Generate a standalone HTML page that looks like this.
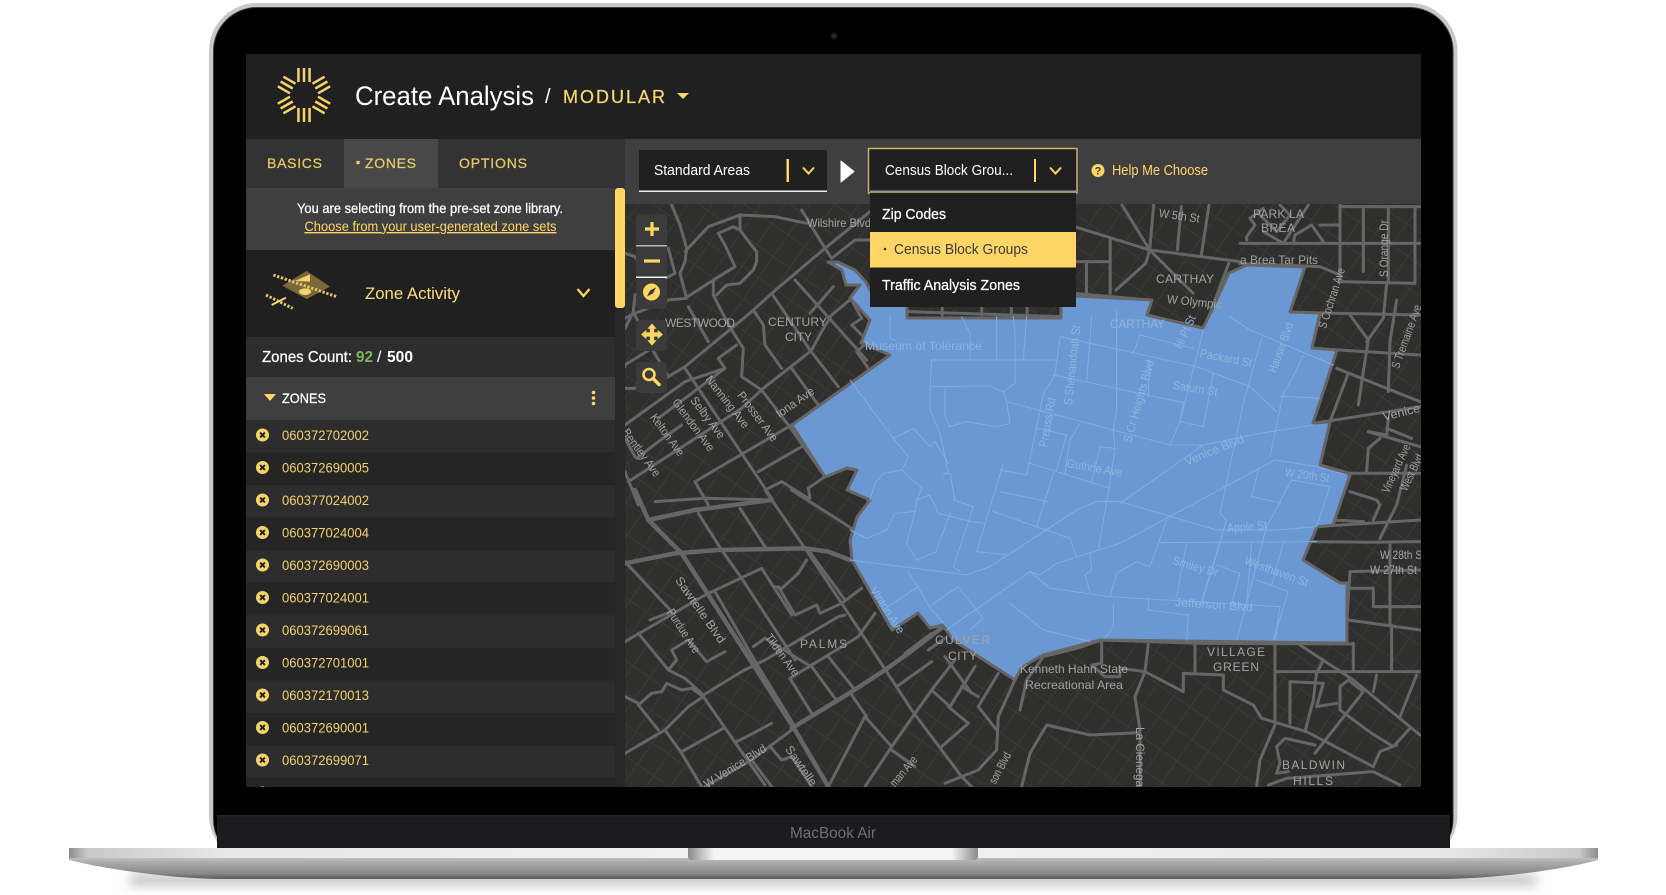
<!DOCTYPE html>
<html><head><meta charset="utf-8"><style>
html,body{margin:0;padding:0;background:#fff;width:1666px;height:895px;overflow:hidden}
svg{display:block;font-family:"Liberation Sans",sans-serif}
polyline{fill:none;stroke:#666;stroke-width:3;stroke-linejoin:round;stroke-linecap:round;vector-effect:non-scaling-stroke}
.w5 polyline{stroke-width:4.5}
.bl polyline{stroke:#80aeea;stroke-width:1}
.lb text{fill:#a3a3a3;font-size:12px}
.bt text{fill:#90b3e2;font-size:12px}
.hv{stroke-width:.25px}
</style></head><body>
<svg width="1666" height="895" viewBox="0 0 1666 895" xmlns="http://www.w3.org/2000/svg">
<defs>
<linearGradient id="baseV" x1="0" y1="0" x2="0" y2="1"><stop offset="0" stop-color="#c8c8c8"/><stop offset=".3" stop-color="#a9a9a9"/><stop offset=".75" stop-color="#8a8a8a"/><stop offset="1" stop-color="#5a5a5a"/></linearGradient>
<linearGradient id="baseH" x1="0" y1="0" x2="1" y2="0"><stop offset="0" stop-color="#8c8c8c"/><stop offset=".012" stop-color="#c9c9c9"/><stop offset=".1" stop-color="#e6e7e9"/><stop offset=".5" stop-color="#f2f3f5"/><stop offset=".9" stop-color="#e6e7e9"/><stop offset=".988" stop-color="#c9c9c9"/><stop offset="1" stop-color="#8c8c8c"/></linearGradient>
<linearGradient id="hing" x1="0" y1="0" x2="1" y2="0"><stop offset="0" stop-color="#8a8a8a"/><stop offset=".09" stop-color="#f4f4f4"/><stop offset=".91" stop-color="#f4f4f4"/><stop offset="1" stop-color="#8a8a8a"/></linearGradient>
<filter id="bl" x="-5%" y="-150%" width="110%" height="400%"><feGaussianBlur stdDeviation="6"/></filter>
<pattern id="st" width="20" height="26" patternUnits="userSpaceOnUse" patternTransform="rotate(35)"><rect width="20" height="26" fill="#2f2f2d"/><path d="M0 .5H20M.5 0V26" stroke="#3a3a38" stroke-width="1" fill="none"/></pattern>
<clipPath id="mc"><rect x="625" y="204" width="796" height="583"/></clipPath>
<clipPath id="lc"><rect x="246" y="420" width="369" height="367"/></clipPath>
<g id="xi"><circle r="6.5" fill="#f6d46b"/><path d="M-2.4-2.4L2.4 2.4M2.4-2.4L-2.4 2.4" stroke="#222" stroke-width="2"/></g>
<g id="bars"><rect x="-6.800" y="-27" width="2.500" height="14" fill="#f4d36b"/><rect x="-1.250" y="-27" width="2.500" height="14" fill="#f4d36b"/><rect x="4.300" y="-27" width="2.500" height="14" fill="#f4d36b"/></g>
</defs>

<!-- base shadow -->
<rect x="130" y="876" width="1406" height="8" fill="#a8a8a8" filter="url(#bl)"/>

<!-- lid -->
<rect x="209" y="3" width="1248.5" height="860" rx="48" fill="#c8c8c8"/>
<rect x="213" y="7" width="1240.5" height="856" rx="44" fill="#3a3a3a"/>
<rect x="214" y="8" width="1238.5" height="855" rx="43" fill="#000"/>
<rect x="217" y="816" width="1233" height="33" fill="#1b1b1d"/>
<rect x="217" y="815" width="1233" height="1.5" fill="#262628"/>
<circle cx="834" cy="36" r="3.5" fill="#1c1c1c"/><circle cx="834" cy="36" r="1.3" fill="#333"/>
<text x="790" y="838" font-size="16" fill="#6f6f71" textLength="86" lengthAdjust="spacingAndGlyphs">MacBook Air</text>

<!-- base -->
<path d="M69 856H1598V860C1570 868 1500 879 1440 879H225C170 879 100 868 69 860Z" fill="url(#baseV)"/>
<rect x="69" y="848" width="1529" height="10" fill="url(#baseH)"/>
<path d="M688 848H978V856Q978 860 974 860H692Q688 860 688 856Z" fill="url(#hing)"/>

<!-- header -->
<rect x="246" y="54" width="1175" height="85" fill="#202020"/>
<g transform="translate(304 95)">
<use href="#bars"/><use href="#bars" transform="rotate(60)"/><use href="#bars" transform="rotate(120)"/><use href="#bars" transform="rotate(180)"/><use href="#bars" transform="rotate(240)"/><use href="#bars" transform="rotate(300)"/>
</g>
<text x="355" y="105" font-size="27" fill="#fff" textLength="179" lengthAdjust="spacingAndGlyphs">Create Analysis</text>
<text x="545" y="103" font-size="20" fill="#fff">/</text>
<text x="563" y="103" font-size="18" fill="#f5d672" class="hv" stroke="#f5d672" textLength="102" lengthAdjust="spacing">MODULAR</text>
<path d="M677 93H689L683 99Z" fill="#f5d672"/>

<!-- map -->
<g clip-path="url(#mc)">
<rect x="625" y="204" width="796" height="583" fill="url(#st)"/>

<g transform="translate(625 205) scale(.3333)">
<polyline points="130,515 180,485 380,320 440,265 600,130 735,20"/>
<polyline points="620,160 690,105 735,105"/>
<polyline points="530,15 600,130 620,160"/>
<polyline points="180,140 250,65 345,30 450,35 545,55"/>
<polyline points="345,30 345,70"/>
<polyline points="280,85 325,65 345,75 375,115 395,140 395,170 385,195 345,235 305,240 275,270"/>
<polyline points="280,85 300,120 330,185 250,235 180,280 130,285 30,325 0,340"/>
<polyline points="330,185 265,225 265,270 285,310 320,375 355,430 350,515 410,555 490,660 600,815"/>
<polyline points="140,0 165,60 185,130 180,170 165,205 185,280"/>
<polyline points="130,130 150,205 30,270 25,320 0,370"/>
<polyline points="0,145 30,155 60,200"/>
<polyline points="190,305 250,410"/>
<polyline points="385,315 415,360 420,420 470,490"/>
<polyline points="440,265 555,435 640,545"/>
<polyline points="510,225 725,465"/>
<polyline points="680,280 620,330 590,380 560,435"/>
<polyline points="680,285 710,340 680,360 730,410 695,440 730,490"/>
<polyline points="555,325 625,245"/>
<polyline points="0,660 180,530 300,490 280,460 335,420"/>
<polyline points="10,830 350,610 415,550 555,440"/>
<polyline points="500,490 580,600"/>
<polyline points="180,490 360,760 440,880"/>
<polyline points="100,640 300,490"/>
<polyline points="35,760 100,710 170,660"/>
<polyline points="0,700 30,755"/>
<polyline points="210,830 500,660"/>
<polyline points="400,800 530,725"/>
<polyline points="600,815 550,850 555,880"/>
<polyline points="600,815 665,790 695,795 730,890"/>
<polyline points="430,850 470,830 550,880"/>
<polyline points="90,890 240,880 440,885"/>
<polyline points="210,830 250,900"/>
<polyline points="0,800 40,900"/>
<polyline points="130,515 80,430 0,480 0,485"/>
<polyline points="0,550 30,550 130,515"/>
<polyline points="80,430 30,330"/>
</g>

<g transform="translate(625 490) scale(.3333)">
<g class="w5"><polyline points="0,220 150,190 280,180 540,175 610,185 675,210"/>
<polyline points="70,90 210,60 440,30"/>
<polyline points="30,0 70,90 170,190 350,470 510,720 610,890"/>
<polyline points="500,715 680,605 780,540 850,490 955,410"/></g>
<polyline points="220,70 290,180 350,265 510,510"/>
<polyline points="345,55 420,170"/>
<polyline points="420,0 540,175 690,400 860,660 1010,860 1040,890"/>
<polyline points="500,0 680,115"/>
<polyline points="550,180 660,330"/>
<polyline points="0,455 240,315 410,235 500,375"/>
<polyline points="270,305 400,530 510,710"/>
<polyline points="450,290 470,295 520,250 545,210"/>
<polyline points="460,290 510,375 575,345 585,370 650,340 710,295"/>
<polyline points="385,470 420,445 550,525"/>
<polyline points="235,615 350,545 420,510 640,380 660,375"/>
<polyline points="495,565 700,440 750,370"/>
<polyline points="495,565 560,670"/>
<polyline points="560,530 630,625"/>
<polyline points="610,500 690,600"/>
<polyline points="815,590 920,515"/>
<polyline points="610,890 720,680 800,770 870,670 920,600 990,510"/>
<polyline points="800,770 720,890"/>
<polyline points="800,780 870,830"/>
<polyline points="680,615 725,680"/>
<polyline points="920,600 975,650 1050,530"/>
<polyline points="1010,590 1060,620"/>
<polyline points="1060,650 1115,720"/>
<polyline points="1060,650 1120,550"/>
<polyline points="1170,570 1120,680 1115,780 1060,840 960,880"/>
<polyline points="950,770 1030,700 970,650"/>
<polyline points="0,790 120,720 190,650 235,620 360,800 420,885"/>
<polyline points="170,785 295,715"/>
<polyline points="120,720 170,790 230,890"/>
<polyline points="335,755 365,740 440,700"/>
<polyline points="240,890 380,810 500,720"/>
<polyline points="380,810 440,890"/>
<polyline points="440,775 470,810 500,800 560,890"/>
<polyline points="40,645 80,610 110,605 125,580 170,600 200,595 235,620"/>
<polyline points="40,645 100,720"/>
<polyline points="130,540 155,510 140,480 190,450 245,515 300,485"/>
<polyline points="75,390 140,365 0,215"/>
<polyline points="40,430 130,540 180,565 235,615"/>
<polyline points="840,490 920,430"/>
<polyline points="910,480 960,445"/>
<polyline points="960,500 1040,610"/>
<polyline points="0,620 40,640"/>
</g>

<g transform="translate(1020 620) scale(.3333)">
<polyline points="0,270 20,180 70,110 170,85 245,60 540,70 1000,72"/>
<polyline points="245,60 245,130 215,135 255,170 300,170 300,145 375,155 490,215 490,160 610,165 610,210 700,255 725,295 860,335 1060,440"/>
<polyline points="375,155 345,230 360,330 360,500"/>
<polyline points="385,70 375,155"/><polyline points="525,70 525,155"/>
<polyline points="765,70 765,300"/><polyline points="1000,70 1000,155"/><polyline points="770,155 1200,155"/>
<polyline points="80,315 210,345 360,338"/><polyline points="80,315 30,400 5,500"/>
<polyline points="840,75 1000,180 1200,345"/>
<polyline points="890,160 910,120"/><polyline points="890,155 880,240 855,335"/>
<polyline points="810,310 810,185 910,190 890,260 950,250"/>
<polyline points="960,200 985,180 1030,215 885,400"/>
<polyline points="960,200 960,270 1055,340 1120,380 1170,325"/>
<polyline points="765,315 720,420 710,500"/>
<polyline points="770,380 795,355 885,375"/>
<polyline points="770,380 780,430 770,460 805,455"/>
<polyline points="745,495 800,475 1060,455 1140,495"/>
<polyline points="1060,440 1080,395 1130,375"/>
<polyline points="1115,15 1115,155"/><polyline points="985,0 1200,30"/>
<polyline points="1070,165 1060,215"/><polyline points="1190,165 1140,290"/>
</g>

<g transform="translate(1240 205) scale(.3333)">
<polyline points="0,115 540,115"/><polyline points="300,5 540,5"/>
<polyline points="300,0 300,210"/><polyline points="370,10 370,200"/><polyline points="445,10 445,230"/><polyline points="525,10 525,230"/>
<polyline points="0,175 240,185 300,210 300,230 525,235"/>
<polyline points="150,322 540,330"/>
<polyline points="330,330 385,405 370,500 355,600"/>
<polyline points="240,330 215,430 540,450"/>
<polyline points="290,490 540,590"/>
<polyline points="325,505 270,650"/>
<polyline points="220,655 540,605"/>
<polyline points="270,650 240,780 330,805 540,805"/>
<polyline points="385,680 540,725"/>
<polyline points="385,680 440,690 445,640"/>
<polyline points="440,670 515,700"/>
<polyline points="330,860 410,885 420,900 400,945"/>
<polyline points="330,810 280,945 370,950"/>
<polyline points="230,965 540,945"/>
<polyline points="215,1010 385,1012 540,1010"/>
<polyline points="420,1000 470,900 500,780"/>
<polyline points="380,800 385,730 420,700"/>
<polyline points="330,1100 540,1095"/><polyline points="330,1100 320,1260"/>
<polyline points="450,1020 450,1260"/>
<polyline points="330,1150 400,1150 400,1205 540,1205"/>
<polyline points="440,235 430,340 380,410"/>
<polyline points="470,285 450,410 445,560"/>
<polyline points="20,105 20,95 45,60 30,40 70,10"/>
<polyline points="60,30 110,80 150,30 120,0"/>
<polyline points="160,115 165,90 215,60 250,110"/>
<polyline points="70,80 130,115 205,0"/>
<polyline points="240,60 300,60"/>
</g>

<g transform="translate(620 130) scale(.3953 .3333)">
<polyline points="1150,290 1340,360 1568,395"/>
<polyline points="1240,330 1240,490"/><polyline points="1180,400 1180,490"/><polyline points="1150,395 1240,395"/>
<polyline points="1270,225 1340,360 1450,490"/>
<polyline points="1350,225 1340,360"/><polyline points="1420,230 1410,360"/><polyline points="1490,225 1470,380"/>
<polyline points="1340,360 1330,400 1255,480"/>
<polyline points="1150,490 1340,510"/>
<polyline points="1540,400 1480,590"/>
<polyline points="730,545 1115,560"/>
<polyline points="815,530 815,555"/><polyline points="915,530 915,555"/><polyline points="990,530 990,555"/><polyline points="1030,530 1030,555"/>
</g>

<!-- blue zone -->
<polygon points="828,262 838,262 855,270 866,282 870,290 880,305 907,305 907,318 1061,318 1061,305 1076,296 1152,300 1147,315 1203,328 1212,310 1229,273 1247,265 1305,267 1290,312 1320,313 1312,348 1337,350 1313,423 1330,422 1320,465 1350,475 1333,525 1317,527 1303,560 1340,583 1347,583 1347,643 1100,640 1043,655 1022,667 1015,680 953,640 943,625 930,628 918,613 892,630 852,560 850,540 857,517 870,500 847,490 857,470 847,468 825,477 792,425 890,355 861,343 870,320 850,298 860,285 846,285 842,270" fill="#6b98d2" stroke="#666" stroke-width="3" stroke-linejoin="round"/>

<g class="bl" transform="translate(850 310) scale(.3333)">
<polyline points="120,15 120,85 135,90"/>
<polyline points="245,150 620,150"/>
<polyline points="245,150 240,230 240,300 270,370 295,490 280,492"/>
<polyline points="240,230 420,228 460,245 470,275 480,340 440,350 350,335 300,350 285,320 285,235"/>
<polyline points="335,20 360,70 360,150"/><polyline points="440,20 440,150"/>
<polyline points="490,20 495,70 495,220 460,245"/><polyline points="530,20 520,150"/>
<polyline points="630,85 615,195 580,250 530,495 450,480"/>
<polyline points="630,80 1040,170 1200,230 1280,305"/>
<polyline points="610,195 1000,278"/>
<polyline points="470,275 960,405 1060,405"/>
<polyline points="800,0 800,300 790,360 795,420 770,575 745,720"/>
<polyline points="725,20 710,215"/><polyline points="900,150 895,260"/>
<polyline points="1000,278 990,335 960,405"/>
<polyline points="1060,60 990,335 1060,350 1090,190"/>
<polyline points="850,130 870,75 1030,115"/>
<polyline points="1140,20 1200,60 1450,165"/>
<polyline points="1235,85 1180,280 1110,610 1130,630 1050,890"/>
<polyline points="1360,135 1330,200 1300,250 1260,440"/>
<polyline points="1290,258 1410,265"/>
<polyline points="1390,345 1230,370 1060,405 810,580"/>
<polyline points="0,750 350,795 420,770 680,600 740,575 810,575 1100,660 1280,660 1400,650"/>
<polyline points="1275,450 1400,470 1490,495"/>
<polyline points="1275,450 810,700 620,760 570,795 540,785 290,960"/>
<polyline points="1325,510 1440,530 1400,650"/>
<polyline points="1325,510 1250,650 1190,880 1160,990"/>
<polyline points="1225,480 1205,560 1295,580"/>
<polyline points="540,460 780,535"/>
<polyline points="650,375 620,480"/><polyline points="690,340 660,390 645,490"/>
<polyline points="750,410 725,520"/><polyline points="750,410 795,415"/>
<polyline points="560,355 650,375"/>
<polyline points="450,545 595,575"/>
<polyline points="610,490 560,650 660,685 680,740"/>
<polyline points="430,605 660,685"/>
<polyline points="460,460 380,725 475,735"/>
<polyline points="0,210 130,385 190,355 240,410 255,395 295,460"/>
<polyline points="130,385 175,440 155,480 100,490 75,520 60,570"/>
<polyline points="155,480 215,535 200,570 195,605 135,610 110,660 50,685 0,660"/>
<polyline points="200,570 240,555 265,610 365,635 405,640"/>
<polyline points="310,570 370,590 310,770 330,785"/>
<polyline points="260,720 300,610"/>
<polyline points="300,490 315,570"/>
<polyline points="195,605 170,700 200,750 260,725"/>
<polyline points="175,785 245,900 290,950"/>
<polyline points="100,900 205,830"/>
<polyline points="245,885 325,830 395,920"/>
<polyline points="540,785 600,835 780,860 1290,890"/>
<polyline points="780,860 800,790 860,755 900,770 950,630"/>
<polyline points="930,698 1400,695"/>
<polyline points="1010,700 980,860"/><polyline points="1110,700 1055,880"/>
<polyline points="1100,765 1170,790 1145,880"/>
<polyline points="1205,700 1190,880"/><polyline points="1300,698 1265,825"/>
<polyline points="1220,810 1315,845 1270,990"/>
<polyline points="895,865 895,900 1015,915 1010,990"/>
<polyline points="480,880 580,960 720,995"/>
<polyline points="720,730 725,780 705,795 720,845"/>
<polyline points="360,960 400,925"/>
<polyline points="790,880 790,950 765,985"/>
<polyline points="1290,890 1275,990"/>
</g>

<!-- map labels, dark -->
<g class="lb" dominant-baseline="central">
<text x="807" y="223" textLength="64" lengthAdjust="spacingAndGlyphs">Wilshire Blvd</text>
<text x="665" y="323" textLength="70" lengthAdjust="spacing">WESTWOOD</text>
<text x="768" y="322" textLength="59" lengthAdjust="spacing">CENTURY</text>
<text x="785" y="337" textLength="27" lengthAdjust="spacing">CITY</text>
<text x="800" y="644" textLength="47" lengthAdjust="spacing">PALMS</text>
<text x="935" y="640" textLength="55" lengthAdjust="spacing">CULVER</text>
<text x="948" y="656" textLength="29" lengthAdjust="spacing">CITY</text>
<text x="1020" y="669" textLength="108" lengthAdjust="spacingAndGlyphs">Kenneth Hahn State</text>
<text x="1025" y="685" textLength="98" lengthAdjust="spacingAndGlyphs">Recreational Area</text>
<text x="1207" y="652" textLength="58" lengthAdjust="spacing">VILLAGE</text>
<text x="1213" y="667" textLength="46" lengthAdjust="spacing">GREEN</text>
<text x="1282" y="765" textLength="63" lengthAdjust="spacing">BALDWIN</text>
<text x="1293" y="781" textLength="40" lengthAdjust="spacing">HILLS</text>
<text x="1240" y="260" textLength="78" lengthAdjust="spacingAndGlyphs">a Brea Tar Pits</text>
<text x="1156" y="279" textLength="58" lengthAdjust="spacing">CARTHAY</text>
<text x="1253" y="214" textLength="51" lengthAdjust="spacing">PARK LA</text>
<text x="1261" y="228" textLength="34" lengthAdjust="spacing">BREA</text>
<text x="1380" y="555" textLength="45" lengthAdjust="spacingAndGlyphs">W 28th St</text>
<text x="1370" y="570" textLength="47" lengthAdjust="spacingAndGlyphs">W 27th St</text>
<text transform="translate(1159 213) rotate(8)" textLength="41" lengthAdjust="spacingAndGlyphs">W 5th St</text>
<text transform="translate(1167 299) rotate(6)" textLength="55" lengthAdjust="spacingAndGlyphs">W Olympic</text>
<text transform="translate(708 377) rotate(52)" textLength="63" lengthAdjust="spacingAndGlyphs">Nanning Ave</text>
<text transform="translate(740 393) rotate(53)" textLength="59" lengthAdjust="spacingAndGlyphs">Prosser Ave</text>
<text transform="translate(777 415) rotate(-35)" textLength="44" lengthAdjust="spacingAndGlyphs">Iona Ave</text>
<text transform="translate(693 398) rotate(53)" textLength="49" lengthAdjust="spacingAndGlyphs">Selby Ave</text>
<text transform="translate(675 400) rotate(53.5)" textLength="62" lengthAdjust="spacingAndGlyphs">Glendon Ave</text>
<text transform="translate(653 415) rotate(54)" textLength="49" lengthAdjust="spacingAndGlyphs">Kelton Ave</text>
<text transform="translate(625 430) rotate(54)" textLength="56" lengthAdjust="spacingAndGlyphs">Bentley Ave</text>
<text transform="translate(678 578) rotate(55)" textLength="78" lengthAdjust="spacingAndGlyphs">Sawtelle Blvd</text>
<text transform="translate(670 610) rotate(57)" textLength="50" lengthAdjust="spacingAndGlyphs">Purdue Ave</text>
<text transform="translate(768 635) rotate(54)" textLength="49" lengthAdjust="spacingAndGlyphs">Tilden Ave</text>
<text transform="translate(788 747) rotate(55)" textLength="46" lengthAdjust="spacingAndGlyphs">Sawtelle</text>
<text transform="translate(705 785) rotate(-32)" textLength="71" lengthAdjust="spacingAndGlyphs">W Venice Blvd</text>
<text transform="translate(892 785) rotate(-50)" textLength="36" lengthAdjust="spacingAndGlyphs">man Ave</text>
<text transform="translate(992 783) rotate(-62)" textLength="34" lengthAdjust="spacingAndGlyphs">son Blvd</text>
<text transform="translate(1140 727) rotate(90)" textLength="60" lengthAdjust="spacingAndGlyphs">La Cienega</text>
<text transform="translate(1384 277) rotate(-90)" textLength="57" lengthAdjust="spacingAndGlyphs">S Orange Dr</text>
<text transform="translate(1322 328) rotate(-72)" textLength="63" lengthAdjust="spacingAndGlyphs">S Cochran Ave</text>
<text transform="translate(1395 368) rotate(-70)" textLength="67" lengthAdjust="spacingAndGlyphs">S Tremaine Ave</text>
<text transform="translate(1383 417) rotate(-14)" textLength="38" lengthAdjust="spacingAndGlyphs">Venice</text>
<text transform="translate(1385 492) rotate(-65)" textLength="52" lengthAdjust="spacingAndGlyphs">Vineyard Ave</text>
<text transform="translate(1403 490) rotate(-64)" textLength="39" lengthAdjust="spacingAndGlyphs">West Blvd</text>
</g>
<!-- map labels, blue -->
<g class="bt" dominant-baseline="central">
<text x="865" y="346" textLength="117" lengthAdjust="spacingAndGlyphs">Museum of Tolerance</text>
<text x="1110" y="324" textLength="55" lengthAdjust="spacing">CARTHAY</text>
<text transform="translate(1068 405) rotate(-84)" textLength="80" lengthAdjust="spacingAndGlyphs">S Shenandoah St</text>
<text transform="translate(1043 447) rotate(-80)" textLength="50" lengthAdjust="spacingAndGlyphs">Preuss Rd</text>
<text transform="translate(1127 442) rotate(-74)" textLength="85" lengthAdjust="spacingAndGlyphs">S Cr Heights Blvd</text>
<text transform="translate(1200 353) rotate(11)" textLength="53" lengthAdjust="spacingAndGlyphs">Packard St</text>
<text transform="translate(1173 385) rotate(9)" textLength="45" lengthAdjust="spacingAndGlyphs">Saturn St</text>
<text transform="translate(1272 372) rotate(-70)" textLength="52" lengthAdjust="spacingAndGlyphs">Hauser Blvd</text>
<text transform="translate(1178 348) rotate(-66)" textLength="35" lengthAdjust="spacingAndGlyphs">Hi Pt St</text>
<text transform="translate(1067 463) rotate(10)" textLength="56" lengthAdjust="spacingAndGlyphs">Guthrie Ave</text>
<text transform="translate(1185 462) rotate(-22)" textLength="63" lengthAdjust="spacingAndGlyphs">Venice Blvd</text>
<text transform="translate(1285 472) rotate(8)" textLength="45" lengthAdjust="spacingAndGlyphs">W 20th St</text>
<text transform="translate(1227 528) rotate(-4)" textLength="40" lengthAdjust="spacingAndGlyphs">Apple St</text>
<text transform="translate(1173 560) rotate(16)" textLength="47" lengthAdjust="spacingAndGlyphs">Smiley Dr</text>
<text transform="translate(1245 560) rotate(20)" textLength="67" lengthAdjust="spacingAndGlyphs">Westhaven St</text>
<text transform="translate(1175 602) rotate(4)" textLength="78" lengthAdjust="spacingAndGlyphs">Jefferson Blvd</text>
<text transform="translate(873 588) rotate(57)" textLength="53" lengthAdjust="spacingAndGlyphs">Vinton Ave</text>
</g>

<!-- map controls -->
<rect x="636" y="214" width="31" height="31" rx="4" fill="#3b3b3b"/>
<rect x="636" y="246" width="31" height="31" fill="#3b3b3b"/>
<rect x="636" y="278" width="31" height="31" rx="4" fill="#3b3b3b"/>
<rect x="636" y="245" width="31" height="1.5" fill="#b8b8b8"/>
<rect x="636" y="276.5" width="31" height="1.5" fill="#eee"/>
<path d="M652 222V236M645 229H659" stroke="#ffd666" stroke-width="3.2" fill="none"/>
<path d="M644 261H660" stroke="#ffd666" stroke-width="3.2" fill="none"/>
<circle cx="651.5" cy="292" r="8.5" fill="#ffd666"/><path d="M656 287.500L653 293.500L647 296.500L650 290.500Z" fill="#3b3b3b"/>
<rect x="636" y="320" width="31" height="31" rx="4" fill="#3b3b3b"/>
<path d="M652 324L656 328.500H653.800V332.700H658V330.500L662.500 334.500L658 338.500V336.300H653.800V340.500H656L652 345L648 340.500H650.200V336.300H646V338.500L641.500 334.500L646 330.500V332.700H650.200V328.500H648Z" fill="#ffd666" stroke="#ffd666" stroke-width=".6"/>
<rect x="636" y="362" width="31" height="31" rx="4" fill="#3b3b3b"/>
<circle cx="649" cy="374.500" r="5.5" fill="none" stroke="#ffd666" stroke-width="2.6"/><path d="M653 378.500L659 384.500" stroke="#ffd666" stroke-width="3.4" stroke-linecap="round"/>
</g>

<!-- toolbar -->
<rect x="625" y="139" width="796" height="65" fill="#3f3f3f"/>
<rect x="639" y="150" width="188" height="42" fill="#202020"/>
<rect x="639" y="190.5" width="188" height="1.5" fill="#eee"/>
<text x="654" y="175" font-size="15" fill="#fff" textLength="96" lengthAdjust="spacingAndGlyphs">Standard Areas</text>
<rect x="786.5" y="159" width="2.5" height="23" fill="#ffd666"/>
<path d="M803 167.500L808.500 173.500L814 167.500" stroke="#ffd666" stroke-width="2" fill="none"/>
<path d="M841 161L854 171.5L841 182Z" fill="#fff" stroke="#fff" stroke-linejoin="round"/>
<rect x="868.5" y="148.5" width="208.5" height="44.5" fill="#202020" stroke="#c9b26a" stroke-width="1.5"/>
<rect x="870" y="190.5" width="206" height="1.5" fill="#999"/>
<text x="885" y="175" font-size="15" fill="#fff" textLength="128" lengthAdjust="spacingAndGlyphs">Census Block Grou...</text>
<rect x="1034" y="159" width="2" height="23" fill="#ffd666"/>
<path d="M1050 167.500L1055.500 173.500L1061 167.500" stroke="#ffd666" stroke-width="2" fill="none"/>
<circle cx="1098" cy="170.500" r="6.5" fill="#ffd666"/>
<text x="1098" y="174.500" font-size="11" font-weight="bold" text-anchor="middle" fill="#3f3f3f">?</text>
<text x="1112" y="175" font-size="15" fill="#ffd666" textLength="96" lengthAdjust="spacingAndGlyphs">Help Me Choose</text>

<!-- dropdown -->
<rect x="870" y="193" width="206" height="114" fill="#202020"/>
<rect x="870" y="232" width="206" height="35.5" fill="#ffd666"/>
<text x="882" y="219" font-size="15" fill="#fff" class="hv" stroke="#fff" textLength="64" lengthAdjust="spacingAndGlyphs">Zip Codes</text>
<circle cx="885" cy="249" r="1.3" fill="#333"/>
<text x="894" y="254" font-size="15" fill="#3a3a3a" textLength="134" lengthAdjust="spacingAndGlyphs">Census Block Groups</text>
<text x="882" y="290" font-size="15" fill="#fff" class="hv" stroke="#fff" textLength="138" lengthAdjust="spacingAndGlyphs">Traffic Analysis Zones</text>

<!-- sidebar -->
<rect x="246" y="139" width="379" height="49" fill="#333"/>
<rect x="344" y="139" width="94" height="49" fill="#484848"/>
<g font-size="14" fill="#e9ca68" stroke="#e9ca68" class="hv">
<text x="267" y="168" textLength="55" lengthAdjust="spacing">BASICS</text>
<rect x="356.500" y="161" width="3" height="3"/>
<text x="365" y="168" textLength="51" lengthAdjust="spacing">ZONES</text>
<text x="459" y="168" textLength="68" lengthAdjust="spacing">OPTIONS</text>
</g>
<rect x="246" y="188" width="369" height="599" fill="#202020"/>
<rect x="615" y="188" width="10" height="599" fill="#272727"/>
<rect x="246" y="188" width="369" height="62" fill="#3f3f3f"/>
<text x="297" y="213" font-size="14" fill="#fff" class="hv" stroke="#fff" textLength="266" lengthAdjust="spacingAndGlyphs">You are selecting from the pre-set zone library.</text>
<text x="304.500" y="231" font-size="14" fill="#ffd666" text-decoration="underline" textLength="252" lengthAdjust="spacingAndGlyphs">Choose from your user-generated zone sets</text>
<rect x="615" y="188" width="10" height="120" rx="3" fill="#ffd666"/>

<!-- zone activity icon -->
<g transform="translate(250 255) scale(.3333)">
<polygon points="170,48 240,95 170,132 97,92" fill="#7a6a3a"/>
<polygon points="135,78 180,58 180,80" fill="#f6d46b"/>
<ellipse cx="165" cy="110" rx="18" ry="10" fill="#f6d46b"/>
<path d="M70 60L260 125M48 120L128 160" stroke="#e2c468" stroke-width="9" stroke-dasharray="7 5" fill="none"/>
<path d="M65 150L108 128" stroke="#f6d46b" stroke-width="6"/>
</g>
<text x="365" y="299" font-size="17" fill="#ffdc78" textLength="95" lengthAdjust="spacingAndGlyphs">Zone Activity</text>
<path d="M577.500 289L583.500 296L589.500 289" stroke="#ffd666" stroke-width="2.2" fill="none"/>

<!-- zones count -->
<rect x="246" y="337" width="369" height="40" fill="#2d2d2d"/>
<text x="262" y="362" font-size="16" fill="#fff" class="hv" stroke="#fff" textLength="90" lengthAdjust="spacingAndGlyphs">Zones Count:</text>
<text x="356" y="362" font-size="16" fill="#7cb65a" font-weight="bold" textLength="17" lengthAdjust="spacingAndGlyphs">92</text>
<text x="377" y="362" font-size="16" fill="#fff">/</text>
<text x="387" y="362" font-size="16" fill="#fff" font-weight="bold" textLength="26" lengthAdjust="spacingAndGlyphs">500</text>

<rect x="246" y="377" width="369" height="43" fill="#3f3f3f"/>
<path d="M264 394H276L270 401Z" fill="#ffd666"/>
<text x="282" y="403" font-size="14" fill="#fff" class="hv" stroke="#fff" textLength="44" lengthAdjust="spacingAndGlyphs">ZONES</text>
<circle cx="593.500" cy="392.500" r="1.8" fill="#ffd666"/><circle cx="593.500" cy="398" r="1.8" fill="#ffd666"/><circle cx="593.500" cy="403.500" r="1.8" fill="#ffd666"/>

<rect x="246" y="420" width="369" height="367" fill="#252525"/>
<g clip-path="url(#lc)">
<rect x="246" y="420" width="369" height="32.500" fill="#2d2d2d"/>
<rect x="246" y="485" width="369" height="32.500" fill="#2d2d2d"/>
<rect x="246" y="550" width="369" height="32.500" fill="#2d2d2d"/>
<rect x="246" y="615.500" width="369" height="32.500" fill="#2d2d2d"/>
<rect x="246" y="680.500" width="369" height="32.500" fill="#2d2d2d"/>
<rect x="246" y="745.500" width="369" height="32.500" fill="#2d2d2d"/>
<use href="#xi" x="262.500" y="435"/>
<use href="#xi" x="262.500" y="467.500"/>
<use href="#xi" x="262.500" y="500"/>
<use href="#xi" x="262.500" y="532.500"/>
<use href="#xi" x="262.500" y="565"/>
<use href="#xi" x="262.500" y="597.500"/>
<use href="#xi" x="262.500" y="630"/>
<use href="#xi" x="262.500" y="662.500"/>
<use href="#xi" x="262.500" y="695"/>
<use href="#xi" x="262.500" y="727.500"/>
<use href="#xi" x="262.500" y="760"/>
<use href="#xi" x="262.500" y="793"/>
<g font-size="14" fill="#f2d16b">
<text x="282" y="440" textLength="87" lengthAdjust="spacingAndGlyphs">060372702002</text>
<text x="282" y="472.500" textLength="87" lengthAdjust="spacingAndGlyphs">060372690005</text>
<text x="282" y="505" textLength="87" lengthAdjust="spacingAndGlyphs">060377024002</text>
<text x="282" y="537.500" textLength="87" lengthAdjust="spacingAndGlyphs">060377024004</text>
<text x="282" y="570" textLength="87" lengthAdjust="spacingAndGlyphs">060372690003</text>
<text x="282" y="602.500" textLength="87" lengthAdjust="spacingAndGlyphs">060377024001</text>
<text x="282" y="635" textLength="87" lengthAdjust="spacingAndGlyphs">060372699061</text>
<text x="282" y="667.500" textLength="87" lengthAdjust="spacingAndGlyphs">060372701001</text>
<text x="282" y="700" textLength="87" lengthAdjust="spacingAndGlyphs">060372170013</text>
<text x="282" y="732.500" textLength="87" lengthAdjust="spacingAndGlyphs">060372690001</text>
<text x="282" y="765" textLength="87" lengthAdjust="spacingAndGlyphs">060372699071</text>
</g>
</g>
</svg>
</body></html>
